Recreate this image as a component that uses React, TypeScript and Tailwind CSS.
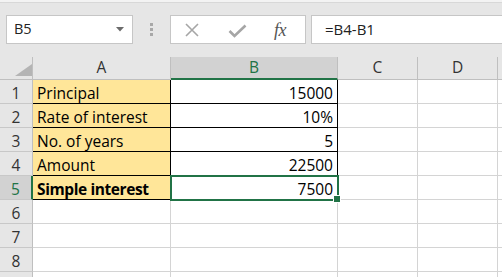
import React from "react";

const rows: { n: number; a?: string; b?: string; bold?: boolean; hideNum?: boolean }[] = [
  { n: 1, a: "Principal", b: "15000" },
  { n: 2, a: "Rate of interest", b: "10%" },
  { n: 3, a: "No. of years", b: "5" },
  { n: 4, a: "Amount", b: "22500" },
  { n: 5, a: "Simple interest", b: "7500", bold: true },
  { n: 6 },
  { n: 7 },
  { n: 8 },
  { n: 9, hideNum: true },
];

export default function App() {
  return (
    <div className="w-[502px] h-[277px] overflow-hidden bg-[#e6e6e6] font-['Open_Sans',sans-serif] text-[#222]">
      {/* ribbon bottom strip */}
      <div className="h-[3px] bg-[#f3f3f3] border-b border-[#d8d8d8]" />

      {/* formula bar */}
      <div className="flex items-stretch h-[29px] mt-[12px]">
        <div className="ml-[6px] w-[127px] bg-white border border-[#c6c6c6] flex items-center justify-between pl-[7px] pr-[8px]">
          <span className="text-[14.5px] leading-none">B5</span>
          <svg width="8" height="5" viewBox="0 0 8 5">
            <polygon points="0,0 8,0 4,4.5" fill="#6b6b6b" />
          </svg>
        </div>
        <div className="ml-[16px] w-[4px] flex flex-col items-center justify-center gap-[2px]">
          <div className="w-[3px] h-[3px] bg-[#a8a8a8]" />
          <div className="w-[3px] h-[3px] bg-[#a8a8a8]" />
          <div className="w-[3px] h-[3px] bg-[#a8a8a8]" />
        </div>
        <div className="ml-[17px] w-[136px] bg-white border border-[#c6c6c6] flex items-center">
          <svg className="ml-[13px]" width="16" height="16" viewBox="0 0 16 16">
            <path d="M2 2 L14 14 M14 2 L2 14" stroke="#a6a6a6" strokeWidth="1.6" fill="none" />
          </svg>
          <svg className="ml-[28px] mt-[3px]" width="19" height="14" viewBox="0 0 19 14">
            <path d="M1.5 7 L6.5 12 L17.5 1.5" stroke="#a6a6a6" strokeWidth="2.6" fill="none" />
          </svg>
          <span className="ml-[27px] font-['Liberation_Serif',serif] italic text-[18px] leading-none text-[#555] tracking-[-0.5px]">
            fx
          </span>
        </div>
        <div className="ml-[5px] flex-1 bg-white border-y border-l border-[#c6c6c6] flex items-center pl-[13px]">
          <span className="text-[15px] leading-none">=B4-B1</span>
        </div>
      </div>

      {/* grid */}
      <div className="mt-[13px] grid grid-cols-[33px_138px_167px_80px_80px_1fr] text-[15.5px]">
        {/* header row */}
        <div className="h-[23px] bg-[#e6e6e6] border-r border-b border-[#bfbfbf] relative">
          <svg className="absolute left-[15px] top-[7px]" width="17" height="12" viewBox="0 0 17 12">
            <polygon points="17,0 17,12 0,12" fill="#b4b4b4" />
          </svg>
        </div>
        <div className="h-[23px] bg-[#e6e6e6] border-r border-b border-[#bfbfbf] flex items-center justify-center text-[#333]">
          A
        </div>
        <div className="h-[23px] bg-[#d2d2d2] border-r border-[#bfbfbf] border-b-2 border-b-[#217346] flex items-center justify-center text-[#217346] pt-[1px]">
          B
        </div>
        <div className="h-[23px] bg-[#e6e6e6] border-r border-b border-[#bfbfbf] flex items-center justify-center text-[#333]">
          C
        </div>
        <div className="h-[23px] bg-[#e6e6e6] border-r border-b border-[#bfbfbf] flex items-center justify-center text-[#333]">
          D
        </div>
        <div className="h-[23px] bg-[#e6e6e6] border-b border-[#bfbfbf]" />

        {rows.map((r) => {
          const data = r.n <= 5;
          const sel = r.n === 5;
          return (
            <React.Fragment key={r.n}>
              <div
                className={
                  sel
                    ? "h-[24px] bg-[#d2d2d2] border-r-2 border-r-[#217346] border-b border-b-[#c8c8c8] flex items-end justify-center pb-[1px] leading-[18px] text-[#217346]"
                    : "h-[24px] bg-[#e6e6e6] border-r border-r-[#bfbfbf] border-b border-b-[#c8c8c8] flex items-end justify-center pb-[1px] leading-[18px] text-[#333]"
                }
              >
                {r.hideNum ? null : r.n}
              </div>
              <div
                className={
                  data
                    ? "h-[24px] bg-[#ffe699] border-r border-b border-black flex items-end pl-[4px] pb-[1px] leading-[18px] whitespace-nowrap overflow-hidden text-black" +
                      (r.bold ? " font-bold tracking-[-0.4px]" : "")
                    : "h-[24px] bg-white border-r border-b border-[#d4d4d4]"
                }
              >
                {r.a}
              </div>
              <div
                className={
                  data
                    ? "h-[24px] bg-white border-r border-b border-black flex items-end justify-end pr-[4px] pb-[1px] leading-[18px] text-black relative"
                    : "h-[24px] bg-white border-r border-b border-[#d4d4d4]"
                }
              >
                {r.b}
                {sel && (
                  <div className="absolute left-[-1px] top-[-1px] w-[169px] h-[26px] border-2 border-[#217346] z-10">
                    <div className="absolute right-[-4px] bottom-[-4px] w-[6px] h-[6px] bg-[#217346] border border-white box-content" />
                  </div>
                )}
              </div>
              <div className="h-[24px] bg-white border-r border-b border-[#d4d4d4]" />
              <div className="h-[24px] bg-white border-r border-b border-[#d4d4d4]" />
              <div className="h-[24px] bg-white border-b border-[#d4d4d4]" />
            </React.Fragment>
          );
        })}
      </div>
    </div>
  );
}
